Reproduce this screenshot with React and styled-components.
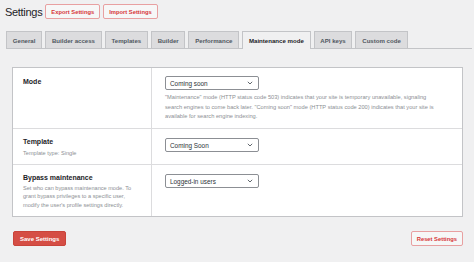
import React from "react";
import styled, { createGlobalStyle } from "styled-components";

const Global = createGlobalStyle`
  html, body { margin: 0; padding: 0; background: #f0f0f1; }
  body { font-family: "Liberation Sans", Arial, sans-serif; color: #1d2327; }
  * { box-sizing: border-box; }
`;

const Page = styled.div`
  width: 474px;
  height: 262px;
  padding: 4px 2px 0 6px;
  overflow: hidden;
`;

const Header = styled.div`
  display: flex;
  align-items: center;
  gap: 3px;
  height: 15px;
`;

const Title = styled.h1`
  margin: 0 0 0 -1px;
  font-size: 11px;
  font-weight: 400;
  letter-spacing: -0.3px;
  color: #1d2327;
`;

const OutlineButton = styled.button`
  height: 15px;
  padding: 0 5px;
  font-family: inherit;
  font-size: 5.8px;
  font-weight: 700;
  color: #d63638;
  background: #f6f7f7;
  border: 1px solid #e8a0a1;
  border-radius: 2px;
  display: flex;
  align-items: center;
  cursor: pointer;
`;

const Tabs = styled.div`
  display: flex;
  gap: 3px;
  margin-top: 12px;
  border-bottom: 1px solid #c3c4c7;
`;

const Tab = styled.div`
  padding: 0 5.75px;
  display: flex;
  align-items: center;
  font-size: 6.1px;
  font-weight: 700;
  color: ${(p) => (p.$active ? "#1d2327" : "#50575e")};
  background: ${(p) => (p.$active ? "#f0f0f1" : "#dcdcde")};
  border: 1px solid #c3c4c7;
  border-bottom: none;
  margin-bottom: ${(p) => (p.$active ? "-1px" : "0")};
  height: ${(p) => (p.$active ? "18px" : "17px")};
`;

const Panel = styled.div`
  margin: 18px 9px 0 6px;
  background: #fff;
  border: 1px solid #c3c4c7;
`;

const Row = styled.div`
  display: grid;
  grid-template-columns: 139px 1fr;
  min-height: ${(p) => p.$h}px;
  border-top: ${(p) => (p.$first ? "none" : "1px solid #dcdcde")};
`;

const LabelCell = styled.div`
  border-right: 1px solid #dcdcde;
  padding: ${(p) => p.$pt}px 18px 0 10px;
`;

const Label = styled.div`
  font-size: 7px;
  font-weight: 700;
  color: #1d2327;
`;

const Help = styled.div`
  font-size: 5.6px;
  line-height: 8.3px;
  color: #8c8f94;
  margin-top: ${(p) => p.$mt || 0}px;
`;

const FieldCell = styled.div`
  padding: ${(p) => p.$pt}px 14px 0 13px;
`;

const Select = styled.div`
  width: 94px;
  height: 14px;
  border: 1px solid #8c8f94;
  border-radius: 2px;
  background: #fff;
  display: flex;
  align-items: center;
  justify-content: space-between;
  padding: 0 5px 0 4px;
  font-size: 6.4px;
  color: #2c3338;
`;

const FieldHelp = styled.div`
  font-size: 5.7px;
  line-height: 9.6px;
  color: #8c8f94;
  margin-top: 3px;
  max-width: 272px;
`;

const Footer = styled.div`
  display: flex;
  justify-content: space-between;
  align-items: center;
  margin: 14px 9px 0 7px;
`;

const SaveButton = styled.button`
  height: 15px;
  padding: 0 6px;
  font-family: inherit;
  font-size: 6px;
  font-weight: 700;
  color: #fff;
  background: #d54e45;
  border: 1px solid #c9443b;
  border-radius: 2px;
  display: flex;
  align-items: center;
`;

const Chevron = () => (
  <svg width="6" height="4" viewBox="0 0 6 4">
    <path d="M0.8 0.8 L3 3 L5.2 0.8" fill="none" stroke="#50575e" strokeWidth="0.9" />
  </svg>
);

export default function App() {
  const tabs = [
    "General",
    "Builder access",
    "Templates",
    "Builder",
    "Performance",
    "Maintenance mode",
    "API keys",
    "Custom code",
  ];
  return (
    <>
      <Global />
      <Page>
        <Header>
          <Title>Settings</Title>
          <OutlineButton>Export Settings</OutlineButton>
          <OutlineButton>Import Settings</OutlineButton>
        </Header>
        <Tabs>
          {tabs.map((t) => (
            <Tab key={t} $active={t === "Maintenance mode"}>
              {t}
            </Tab>
          ))}
        </Tabs>
        <Panel>
          <Row $first $h={60}>
            <LabelCell $pt={10}>
              <Label>Mode</Label>
            </LabelCell>
            <FieldCell $pt={8}>
              <Select>
                Coming soon
                <Chevron />
              </Select>
              <FieldHelp>
                "Maintenance" mode (HTTP status code 503) indicates that your site is temporary
                unavailable, signaling search engines to come back later. "Coming soon" mode (HTTP
                status code 200) indicates that your site is available for search engine indexing.
              </FieldHelp>
            </FieldCell>
          </Row>
          <Row $h={36}>
            <LabelCell $pt={9}>
              <Label>Template</Label>
              <Help $mt={4}>Template type: Single</Help>
            </LabelCell>
            <FieldCell $pt={9}>
              <Select>
                Coming Soon
                <Chevron />
              </Select>
            </FieldCell>
          </Row>
          <Row $h={52}>
            <LabelCell $pt={9}>
              <Label>Bypass maintenance</Label>
              <Help $mt={3}>
                Set who can bypass maintenance mode. To grant bypass privileges to a specific user,
                modify the user's profile settings directly.
              </Help>
            </LabelCell>
            <FieldCell $pt={9}>
              <Select>
                Logged-in users
                <Chevron />
              </Select>
            </FieldCell>
          </Row>
        </Panel>
        <Footer>
          <SaveButton>Save Settings</SaveButton>
          <OutlineButton>Reset Settings</OutlineButton>
        </Footer>
      </Page>
    </>
  );
}
